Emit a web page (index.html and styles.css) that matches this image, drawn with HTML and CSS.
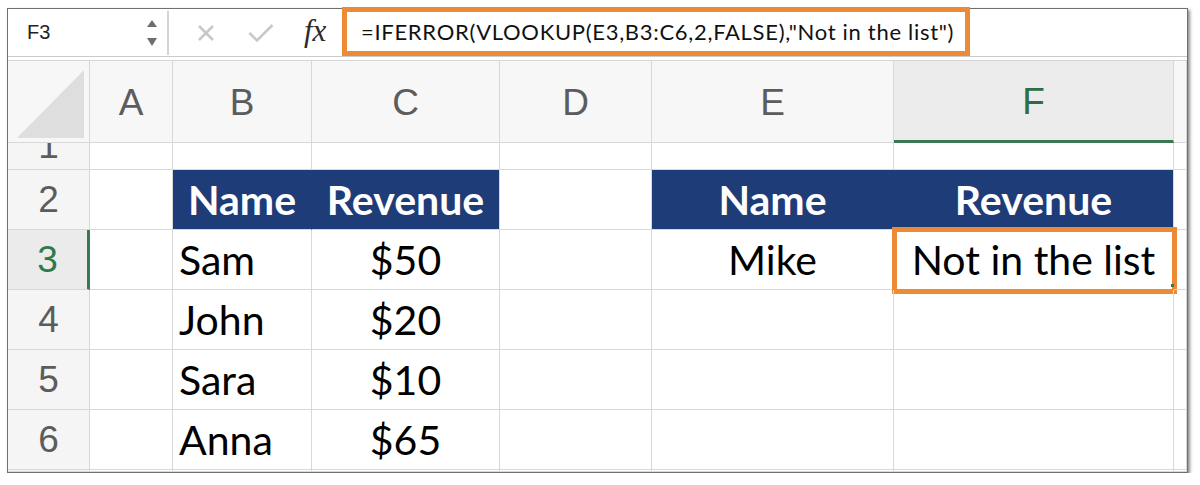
FILE: index.html
```html
<!DOCTYPE html>
<html lang="en">
<head>
    <meta charset="UTF-8">
    <title>IFERROR with VLOOKUP</title>
    <link rel="stylesheet" href="styles.css">
</head>
<body>
    <div class="frame">
        <!-- Barra de fórmulas -->
        <div class="formula-bar">
            <div class="name-box">
                <span class="cell-ref">F3</span>
                <svg class="spin" width="12" height="28" viewBox="0 0 12 28">
                    <path d="M1 8 L6 1 L11 8 Z" fill="#6f6f6f"/>
                    <path d="M1 19 L6 27 L11 19 Z" fill="#6f6f6f"/>
                </svg>
            </div>
            <svg class="icon-cancel" width="18" height="18" viewBox="0 0 18 18">
                <path d="M2 2 L16 16 M16 2 L2 16" stroke="#c8c8c8" stroke-width="2.6" fill="none"/>
            </svg>
            <svg class="icon-enter" width="26" height="20" viewBox="0 0 26 20">
                <path d="M1.5 10 L9 17.5 L24.5 2" stroke="#c8c8c8" stroke-width="2.6" fill="none"/>
            </svg>
            <span class="fx">fx</span>
            <div class="formula">=IFERROR(VLOOKUP(E3,B3:C6,2,FALSE),"Not in the list")</div>
        </div>

        <!-- Hoja -->
        <div class="sheet">
            <div class="hd corner">
                <svg width="68" height="69" viewBox="0 0 68 69"><path d="M0 68 L67 68 L67 0 Z" fill="#dedede"/></svg>
            </div>
            <div class="hd">A</div>
            <div class="hd">B</div>
            <div class="hd">C</div>
            <div class="hd">D</div>
            <div class="hd">E</div>
            <div class="hd hd-sel">F</div>
            <div class="hd"></div>

            <div class="rh rh-cut"><span>1</span></div>
            <div class="c"></div><div class="c"></div><div class="c"></div><div class="c"></div><div class="c"></div><div class="c"></div><div class="c"></div>

            <div class="rh">2</div>
            <div class="c"></div>
            <div class="c blue join">Name</div>
            <div class="c blue">Revenue</div>
            <div class="c"></div>
            <div class="c blue join">Name</div>
            <div class="c blue">Revenue</div>
            <div class="c"></div>

            <div class="rh rh-sel">3</div>
            <div class="c"></div>
            <div class="c left">Sam</div>
            <div class="c mid">$50</div>
            <div class="c"></div>
            <div class="c mid">Mike</div>
            <div class="c mid active">Not in the list<span class="outline"></span><span class="handle"></span></div>
            <div class="c"></div>

            <div class="rh">4</div>
            <div class="c"></div>
            <div class="c left">John</div>
            <div class="c mid">$20</div>
            <div class="c"></div><div class="c"></div><div class="c"></div><div class="c"></div>

            <div class="rh">5</div>
            <div class="c"></div>
            <div class="c left">Sara</div>
            <div class="c mid">$10</div>
            <div class="c"></div><div class="c"></div><div class="c"></div><div class="c"></div>

            <div class="rh">6</div>
            <div class="c"></div>
            <div class="c left">Anna</div>
            <div class="c mid">$65</div>
            <div class="c"></div><div class="c"></div><div class="c"></div><div class="c"></div>

            <div class="rh"></div>
            <div class="c"></div><div class="c"></div><div class="c"></div><div class="c"></div><div class="c"></div><div class="c"></div><div class="c"></div>
        </div>
    </div>
</body>
</html>
```

FILE: styles.css
```css
body {
    margin: 0;
    background-color: #fff;
    font-family: 'Lato', sans-serif;
}

.frame {
    margin: 8px 0 0 7px;
    width: 1181px;
    height: 465px;
    box-sizing: border-box;
    border: 1px solid #707070;
    box-shadow: 2px 2px 3px rgba(0, 0, 0, 0.45);
    display: flex;
    flex-direction: column;
    background-color: #fff;
}

/* Barra de fórmulas */
.formula-bar {
    flex: none;
    height: 47px;
    display: flex;
    align-items: center;
    border-bottom: 1px solid #cbcbcb;
    margin-bottom: 3px;
}

.name-box {
    width: 161px;
    height: 44px;
    box-sizing: border-box;
    border-right: 2px solid #d4d4d4;
    display: flex;
    align-items: center;
    padding-left: 19px;
}

.cell-ref {
    font-family: 'Liberation Sans', sans-serif;
    font-size: 20px;
    color: #222;
}

.spin {
    margin-left: auto;
    margin-right: 9px;
}

.icon-cancel {
    margin-left: 28px;
}

.icon-enter {
    margin-left: 33px;
}

.fx {
    margin-left: 30px;
    width: 32px;
    font-family: 'Liberation Serif', serif;
    font-style: italic;
    font-size: 31px;
    color: #2a2a2a;
    margin-top: -3px;
}

.formula {
    align-self: flex-start;
    margin-top: -2px;
    margin-left: 6px;
    width: 628px;
    height: 49px;
    box-sizing: border-box;
    border: 5px solid #ec8a35;
    padding: 6px 0 0 14px;
    font-size: 22px;
    letter-spacing: 0.7px;
    color: #111;
    white-space: nowrap;
}

/* Hoja */
.sheet {
    flex: 1;
    display: grid;
    grid-template-columns: 82px 83px 139px 188px 152px 242px 280px 1fr;
    grid-template-rows: 82px 27px repeat(5, 60px) 1fr;
    border-top: 1px solid #d5d5d5;
}

.sheet > div {
    box-sizing: border-box;
    border-right: 1px solid #d8d8d8;
    border-bottom: 1px solid #d8d8d8;
    display: flex;
    align-items: center;
    position: relative;
}

.hd {
    background-color: #f7f7f7;
    justify-content: center;
    font-family: 'Liberation Sans', sans-serif;
    font-size: 37px;
    color: #5c5c5c;
    padding-top: 2px;
}

.hd-sel {
    background-color: #ececec;
    color: #2f6e44;
    border-bottom: 3px solid #3b7750 !important;
}

.corner {
    align-items: flex-end !important;
    justify-content: flex-end;
    padding: 0 4px 3px 0;
}

.rh {
    background-color: #f5f5f5;
    justify-content: center;
    font-family: 'Liberation Sans', sans-serif;
    font-size: 37px;
    color: #5c5c5c;
}

.rh-sel {
    background-color: #ebebeb;
    color: #2f7a4a;
    border-right: 3px solid #3b7750 !important;
}

.rh-cut {
    align-items: flex-end !important;
    overflow: hidden;
}

.rh-cut span {
    line-height: 36px;
    margin-bottom: 5px;
}

.c {
    font-size: 41px;
    color: #000;
}

.left {
    padding-left: 6px;
}

.mid {
    justify-content: center;
}

.blue {
    background-color: #1e3c78;
    color: #fff;
    font-weight: bold;
    justify-content: center;
}

.blue.join {
    border-right-color: #1e3c78 !important;
}

.outline {
    position: absolute;
    left: -2px;
    top: -3px;
    right: -4px;
    bottom: -5px;
    border: 5px solid #ec8a35;
}

.handle {
    position: absolute;
    right: -1px;
    bottom: 2px;
    width: 3px;
    height: 3px;
    background-color: #2e7d4a;
}
```
